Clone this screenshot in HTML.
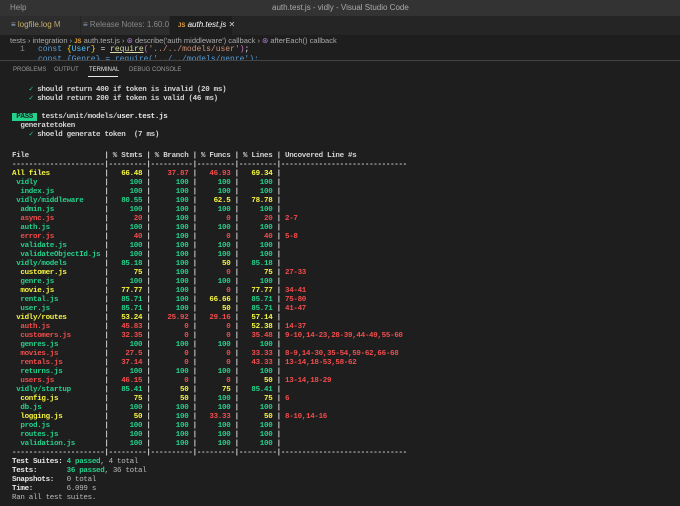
<!DOCTYPE html>
<html><head><meta charset="utf-8"><style>
*{margin:0;padding:0;box-sizing:border-box}
body{width:680px;height:506px;background:#1e1e1e;overflow:hidden;font-family:"Liberation Sans",sans-serif;position:relative;color:#ccc}
.abs{position:absolute;white-space:nowrap}
.mono{font-family:"Liberation Mono",monospace}
.term{position:absolute;left:12px;font-family:"Liberation Mono",monospace;font-size:7.5px;letter-spacing:-0.3px;line-height:9px;color:#d4d4d4;font-weight:bold}
.term div{height:9px;white-space:pre}
.c0{display:inline-block;width:92.4px}
.c1{display:inline-block;width:37.8px;text-align:right;padding-right:4.2px}
.c2{display:inline-block;width:42px;text-align:right;padding-right:4.2px}
.g{color:#23d18b}.y{color:#f5f543}.r{color:#f14c4c}.w{color:#e8e8e8}.s{color:#bbb;font-weight:normal}
</style></head><body>
<div class="abs" style="left:0;top:0;width:680px;height:16px;background:#333"></div>
<div class="abs" style="left:10px;top:3px;font-size:8px;color:#999">Help</div>
<div class="abs" style="left:272px;top:3px;font-size:8px;color:#aaa">auth.test.js - vidly - Visual Studio Code</div>
<div class="abs" style="left:0;top:16px;width:680px;height:19px;background:#252526"></div>
<div class="abs" style="left:0;top:16px;width:80px;height:19px;background:#2d2d2d"></div>
<div class="abs" style="left:81px;top:16px;width:88px;height:19px;background:#2d2d2d"></div>
<div class="abs" style="left:170px;top:16px;width:62px;height:19px;background:#1e1e1e"></div>
<div class="abs" style="left:11px;top:20px;font-size:8px;color:#c9b26b"><span style="color:#9cb0d0">≡</span> logfile.log <span style="color:#b8a46a">M</span></div>
<div class="abs" style="left:83px;top:20px;font-size:8px;color:#888"><span style="color:#8aa0c0">≡</span> Release Notes: 1.60.0</div>
<div class="abs" style="left:178px;top:20px;font-size:8px;color:#fff"><span style="color:#e8a33c;font-weight:bold;font-size:6px">JS</span> <i>auth.test.js</i> <span style="color:#ccc">✕</span></div>
<div class="abs" style="left:10px;top:36px;font-size:7.5px;color:#aaa">tests › integration › <span style="color:#e8a33c;font-size:6px;font-weight:bold">JS</span> auth.test.js › <span style="color:#b180d7">⊛</span> describe('auth middleware') callback › <span style="color:#b180d7">⊛</span> afterEach() callback</div>
<div class="abs mono" style="left:20px;top:45px;font-size:8px;color:#858585">1</div>
<div class="abs mono" style="left:38px;top:45px;font-size:8px;color:#ddd"><span style="color:#569cd6">const</span> <span style="color:#ffd700">{</span><span style="color:#4fc1ff">User</span><span style="color:#ffd700">}</span> = <span style="color:#dcdcaa;text-decoration:underline">require</span><span style="color:#da70d6">(</span><span style="color:#ce9178">'../../models/user'</span><span style="color:#da70d6">)</span>;</div>
<div class="abs mono" style="left:38px;top:55px;font-size:8px;color:#569cd6;height:5px;overflow:hidden">const {Genre} = require('../../models/genre');</div>
<div class="abs" style="left:0;top:60px;width:680px;height:1px;background:#444"></div>
<div class="abs" style="left:13px;top:67px;font-size:6px;color:#999">PROBLEMS</div>
<div class="abs" style="left:54px;top:67px;font-size:6px;color:#999">OUTPUT</div>
<div class="abs" style="left:89px;top:67px;font-size:6px;color:#e7e7e7">TERMINAL</div>
<div class="abs" style="left:88px;top:76px;width:30px;height:1px;background:#e7e7e7"></div>
<div class="abs" style="left:129px;top:67px;font-size:6px;color:#999">DEBUG CONSOLE</div>

<div class="term" style="top:86px"><div>    <span class="g">✓</span> should return 400 if token is invalid (20 ms)</div><div>    <span class="g">✓</span> should return 200 if token is valid (46 ms)</div><div> </div><div><span style="background:#23d18b;color:#1e1e1e"> PASS </span> tests/unit/models/<span class="w">user.test.js</span></div><div>  generatetoken</div><div>    <span class="g">✓</span> shoeld generate token  (7 ms)</div></div>

<div class="term" style="top:152px"><div><span class="c0">File</span>|<span class="c1">% Stmts</span>|<span class="c2">% Branch</span>|<span class="c1">% Funcs</span>|<span class="c1">% Lines</span>| Uncovered Line #s</div><div>----------------------|---------|----------|---------|---------|------------------------------</div><div><span class="c0 y">All files</span>|<span class="c1 y">66.48</span>|<span class="c2 r">37.87</span>|<span class="c1 r">46.93</span>|<span class="c1 y">69.34</span>|</div><div><span class="c0 g"> vidly</span>|<span class="c1 g">100</span>|<span class="c2 g">100</span>|<span class="c1 g">100</span>|<span class="c1 g">100</span>|</div><div><span class="c0 g">  index.js</span>|<span class="c1 g">100</span>|<span class="c2 g">100</span>|<span class="c1 g">100</span>|<span class="c1 g">100</span>|</div><div><span class="c0 g"> vidly/middleware</span>|<span class="c1 g">80.55</span>|<span class="c2 g">100</span>|<span class="c1 y">62.5</span>|<span class="c1 y">78.78</span>|</div><div><span class="c0 g">  admin.js</span>|<span class="c1 g">100</span>|<span class="c2 g">100</span>|<span class="c1 g">100</span>|<span class="c1 g">100</span>|</div><div><span class="c0 r">  async.js</span>|<span class="c1 r">20</span>|<span class="c2 g">100</span>|<span class="c1 r">0</span>|<span class="c1 r">20</span>| <span class="r">2-7</span></div><div><span class="c0 g">  auth.js</span>|<span class="c1 g">100</span>|<span class="c2 g">100</span>|<span class="c1 g">100</span>|<span class="c1 g">100</span>|</div><div><span class="c0 r">  error.js</span>|<span class="c1 r">40</span>|<span class="c2 g">100</span>|<span class="c1 r">0</span>|<span class="c1 r">40</span>| <span class="r">5-8</span></div><div><span class="c0 g">  validate.js</span>|<span class="c1 g">100</span>|<span class="c2 g">100</span>|<span class="c1 g">100</span>|<span class="c1 g">100</span>|</div><div><span class="c0 g">  validateObjectId.js</span>|<span class="c1 g">100</span>|<span class="c2 g">100</span>|<span class="c1 g">100</span>|<span class="c1 g">100</span>|</div><div><span class="c0 g"> vidly/models</span>|<span class="c1 g">85.18</span>|<span class="c2 g">100</span>|<span class="c1 y">50</span>|<span class="c1 g">85.18</span>|</div><div><span class="c0 y">  customer.js</span>|<span class="c1 y">75</span>|<span class="c2 g">100</span>|<span class="c1 r">0</span>|<span class="c1 y">75</span>| <span class="r">27-33</span></div><div><span class="c0 g">  genre.js</span>|<span class="c1 g">100</span>|<span class="c2 g">100</span>|<span class="c1 g">100</span>|<span class="c1 g">100</span>|</div><div><span class="c0 y">  movie.js</span>|<span class="c1 y">77.77</span>|<span class="c2 g">100</span>|<span class="c1 r">0</span>|<span class="c1 y">77.77</span>| <span class="r">34-41</span></div><div><span class="c0 g">  rental.js</span>|<span class="c1 g">85.71</span>|<span class="c2 g">100</span>|<span class="c1 y">66.66</span>|<span class="c1 g">85.71</span>| <span class="r">75-80</span></div><div><span class="c0 g">  user.js</span>|<span class="c1 g">85.71</span>|<span class="c2 g">100</span>|<span class="c1 y">50</span>|<span class="c1 g">85.71</span>| <span class="r">41-47</span></div><div><span class="c0 y"> vidly/routes</span>|<span class="c1 y">53.24</span>|<span class="c2 r">25.92</span>|<span class="c1 r">29.16</span>|<span class="c1 y">57.14</span>|</div><div><span class="c0 r">  auth.js</span>|<span class="c1 r">45.83</span>|<span class="c2 r">0</span>|<span class="c1 r">0</span>|<span class="c1 y">52.38</span>| <span class="r">14-37</span></div><div><span class="c0 r">  customers.js</span>|<span class="c1 r">32.35</span>|<span class="c2 r">0</span>|<span class="c1 r">0</span>|<span class="c1 r">35.48</span>| <span class="r">9-10,14-23,28-39,44-49,55-60</span></div><div><span class="c0 g">  genres.js</span>|<span class="c1 g">100</span>|<span class="c2 g">100</span>|<span class="c1 g">100</span>|<span class="c1 g">100</span>|</div><div><span class="c0 r">  movies.js</span>|<span class="c1 r">27.5</span>|<span class="c2 r">0</span>|<span class="c1 r">0</span>|<span class="c1 r">33.33</span>| <span class="r">8-9,14-30,35-54,59-62,66-68</span></div><div><span class="c0 r">  rentals.js</span>|<span class="c1 r">37.14</span>|<span class="c2 r">0</span>|<span class="c1 r">0</span>|<span class="c1 r">43.33</span>| <span class="r">13-14,18-53,58-62</span></div><div><span class="c0 g">  returns.js</span>|<span class="c1 g">100</span>|<span class="c2 g">100</span>|<span class="c1 g">100</span>|<span class="c1 g">100</span>|</div><div><span class="c0 r">  users.js</span>|<span class="c1 r">46.15</span>|<span class="c2 r">0</span>|<span class="c1 r">0</span>|<span class="c1 y">50</span>| <span class="r">13-14,18-29</span></div><div><span class="c0 g"> vidly/startup</span>|<span class="c1 g">85.41</span>|<span class="c2 y">50</span>|<span class="c1 y">75</span>|<span class="c1 g">85.41</span>|</div><div><span class="c0 y">  config.js</span>|<span class="c1 y">75</span>|<span class="c2 y">50</span>|<span class="c1 g">100</span>|<span class="c1 y">75</span>| <span class="r">6</span></div><div><span class="c0 g">  db.js</span>|<span class="c1 g">100</span>|<span class="c2 g">100</span>|<span class="c1 g">100</span>|<span class="c1 g">100</span>|</div><div><span class="c0 y">  logging.js</span>|<span class="c1 y">50</span>|<span class="c2 g">100</span>|<span class="c1 r">33.33</span>|<span class="c1 y">50</span>| <span class="r">8-10,14-16</span></div><div><span class="c0 g">  prod.js</span>|<span class="c1 g">100</span>|<span class="c2 g">100</span>|<span class="c1 g">100</span>|<span class="c1 g">100</span>|</div><div><span class="c0 g">  routes.js</span>|<span class="c1 g">100</span>|<span class="c2 g">100</span>|<span class="c1 g">100</span>|<span class="c1 g">100</span>|</div><div><span class="c0 g">  validation.js</span>|<span class="c1 g">100</span>|<span class="c2 g">100</span>|<span class="c1 g">100</span>|<span class="c1 g">100</span>|</div><div>----------------------|---------|----------|---------|---------|------------------------------</div><div class="w">Test Suites: <span class="g">4 passed</span><span class="s">, 4 total</span></div><div class="w">Tests:       <span class="g">36 passed</span><span class="s">, 36 total</span></div><div class="w">Snapshots:   <span class="s">0 total</span></div><div class="w">Time:        <span class="s">6.099 s</span></div><div class="s">Ran all test suites.</div></div>
</body></html>
